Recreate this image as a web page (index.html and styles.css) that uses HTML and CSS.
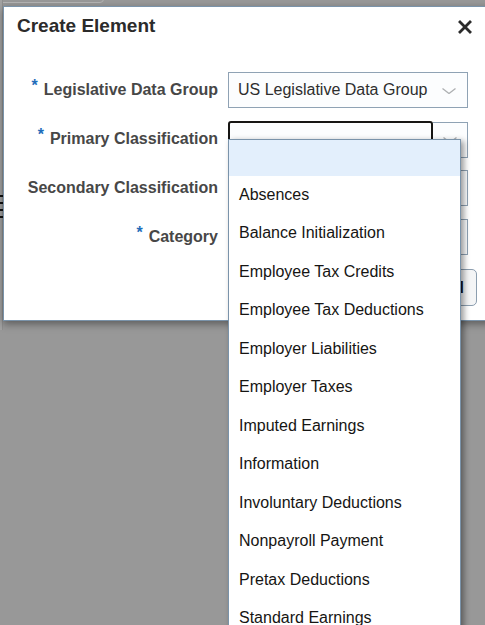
FILE: index.html
```html
<!DOCTYPE html>
<html lang="en">
<head>
<meta charset="utf-8">
<title>Create Element</title>
<link rel="stylesheet" href="styles.css">
</head>
<body>
<div class="backdrop">
  <div class="bg-tab"></div>
  <div class="bg-edge"></div>
  <div class="bg-marks"><i></i><i></i><i></i><i></i></div>
</div>

<div class="dialog" role="dialog" aria-label="Create Element">
  <div class="dialog-header">
    <h1 class="dialog-title">Create Element</h1>
    <button class="close-btn" aria-label="Close">
      <svg width="14" height="14" viewBox="0 0 14 14"><path d="M2 2 L12 12 M12 2 L2 12" stroke="#2b2b2b" stroke-width="2.8" stroke-linecap="square" fill="none"/></svg>
    </button>
  </div>

  <div class="form">
    <label class="label"><span class="req">*</span>Legislative Data Group</label>
    <div class="field">
      <div class="field-text">US Legislative Data Group</div>
      <div class="field-btn"><svg width="14" height="6" viewBox="0 0 14 6"><path d="M0.5 0.5 L7 5.5 L13.5 0.5" stroke="#aeb0b2" stroke-width="1.3" fill="none"/></svg></div>
    </div>

    <label class="label"><span class="req">*</span>Primary Classification</label>
    <div class="field field-focus">
      <div class="field-text focused"></div>
      <div class="field-btn"><svg width="14" height="6" viewBox="0 0 14 6"><path d="M0.5 0.5 L7 5.5 L13.5 0.5" stroke="#aeb0b2" stroke-width="1.3" fill="none"/></svg></div>
    </div>

    <label class="label">Secondary Classification</label>
    <div class="field">
      <div class="field-text"></div>
      <div class="field-btn"></div>
    </div>

    <label class="label"><span class="req">*</span>Category</label>
    <div class="field">
      <div class="field-text"></div>
      <div class="field-btn"></div>
    </div>
  </div>

  <div class="dialog-footer">
    <button class="btn">Cancel</button>
  </div>
</div>

<ul class="listbox" role="listbox">
  <li class="opt opt-blank selected"></li>
  <li class="opt">Absences</li>
  <li class="opt">Balance Initialization</li>
  <li class="opt">Employee Tax Credits</li>
  <li class="opt">Employee Tax Deductions</li>
  <li class="opt">Employer Liabilities</li>
  <li class="opt">Employer Taxes</li>
  <li class="opt">Imputed Earnings</li>
  <li class="opt">Information</li>
  <li class="opt">Involuntary Deductions</li>
  <li class="opt">Nonpayroll Payment</li>
  <li class="opt">Pretax Deductions</li>
  <li class="opt">Standard Earnings</li>
</ul>
</body>
</html>
```

FILE: styles.css
```css
* { box-sizing: border-box; }

html, body {
  margin: 0;
  padding: 0;
}

body {
  width: 485px;
  height: 625px;
  overflow: hidden;
  position: relative;
  background: #989898;
  font-family: "Liberation Sans", Arial, sans-serif;
}

/* dimmed page behind the modal */
.backdrop {
  position: absolute;
  inset: 0;
}
.bg-tab {
  position: absolute;
  left: -6px;
  top: -10px;
  width: 110px;
  height: 13px;
  border: 1px solid #b4b4b4;
  border-radius: 4px;
}
.bg-edge {
  position: absolute;
  left: 0;
  top: 0;
  width: 3px;
  height: 330px;
  background: #a2a2a2;
  border-right: 1px solid #8f8f8f;
}
.bg-marks {
  position: absolute;
  left: 0;
  top: 195px;
  display: flex;
  flex-direction: column;
  gap: 5px;
}
.bg-marks i {
  display: block;
  width: 3px;
  height: 2px;
  background: #111;
}

/* dialog */
.dialog {
  position: absolute;
  left: 3px;
  top: 6px;
  width: 520px;
  height: 315px;
  background: #fff;
  border: 1px solid #7a93aa;
  box-shadow: 0 3px 8px rgba(0, 0, 0, 0.4);
  display: flex;
  flex-direction: column;
}

.dialog-header {
  display: flex;
  align-items: flex-start;
  justify-content: space-between;
  padding: 8px 0 0 13px;
  width: 485px;
}
.dialog-title {
  margin: 0;
  font-size: 19px;
  line-height: 22px;
  font-weight: bold;
  color: #2b2b2b;
}
.close-btn {
  border: 0;
  background: transparent;
  padding: 0;
  margin: 5px 17px 0 0;
  width: 14px;
  height: 14px;
  display: flex;
}

.form {
  display: grid;
  grid-template-columns: 214px 239.5px;
  column-gap: 10px;
  row-gap: 12.6px;
  margin-top: 35px;
  align-items: center;
}

.label {
  text-align: right;
  font-size: 16px;
  line-height: 18px;
  font-weight: bold;
  color: #474747;
  white-space: nowrap;
}
.req {
  color: #1f6dba;
  margin-right: 6px;
  line-height: 0;
  vertical-align: 4px;
}

.field {
  height: 36px;
  display: flex;
  background: #fcfdfe;
  border: 1px solid #8fa2b4;
}
.field-text {
  flex: 1;
  display: flex;
  align-items: center;
  padding-left: 9px;
  font-size: 16px;
  color: #2e2e2e;
  white-space: nowrap;
}
.field-btn {
  width: 35px;
  display: flex;
  align-items: center;
  justify-content: center;
  padding-top: 1px;
}

.field-focus {
  border: 0;
  background: transparent;
  height: 37px;
}
.field-focus .field-text {
  border: 2px solid #161513;
  border-radius: 3px;
  background: #fcfdfe;
}
.field-focus .field-btn {
  border: 1px solid #8fa2b4;
  border-left: 0;
  background: #fcfdfe;
  margin: 1px 0 0 0;
  height: 36px;
}

.dialog-footer {
  display: flex;
  justify-content: flex-end;
  padding-right: 45px;
  margin-top: 14px;
}
.btn {
  height: 37.5px;
  padding: 0 12px;
  border: 1px solid #8c9eaf;
  border-radius: 5px;
  background: #f4f5f6;
  font-family: "Liberation Sans", Arial, sans-serif;
  font-size: 16px;
  font-weight: bold;
  color: #161513;
}

/* dropdown popup */
.listbox {
  position: absolute;
  left: 228px;
  top: 139px;
  width: 233px;
  margin: 0;
  padding: 0;
  list-style: none;
  background: #fff;
  border: 1px solid #7a93aa;
  box-shadow: 3px 2px 6px rgba(0, 0, 0, 0.4);
}
.opt {
  height: 38.5px;
  display: flex;
  align-items: center;
  padding-left: 10px;
  font-size: 16px;
  color: #161513;
  white-space: nowrap;
}
.opt-blank {
  height: 35.5px;
}
.selected {
  background: #e3effc;
}
```
